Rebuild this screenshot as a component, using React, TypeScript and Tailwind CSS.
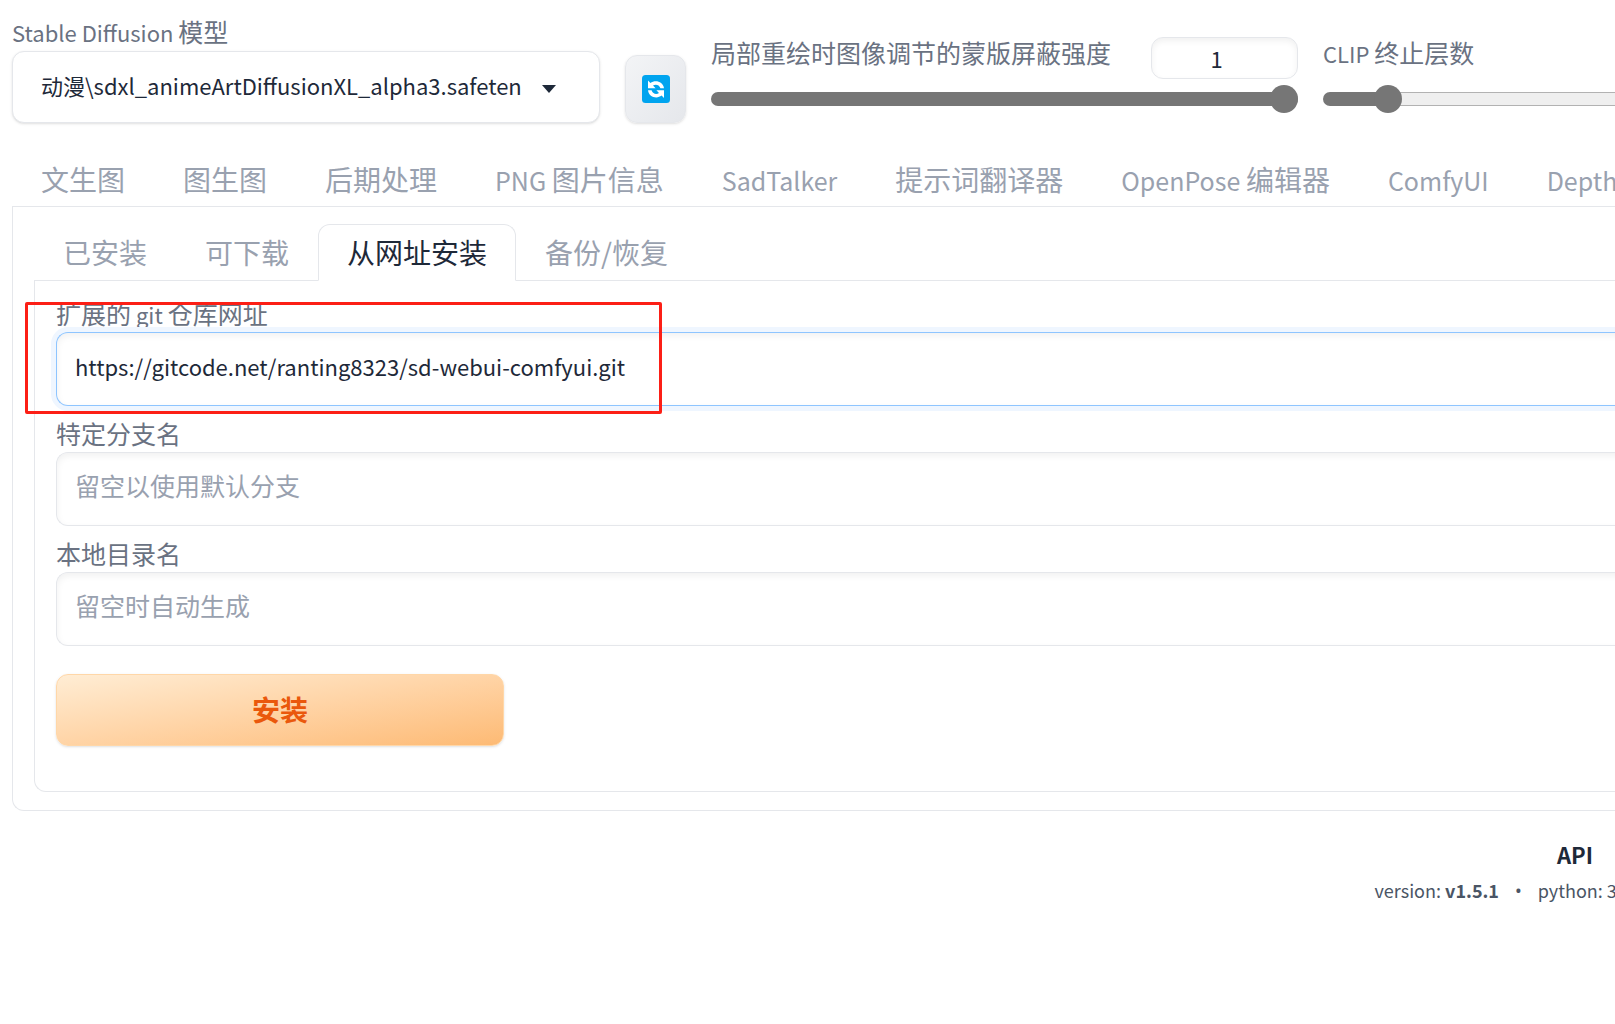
import { useState, type ReactNode } from 'react';

const mainTabs = [
  { cjk: '文生图' },
  { cjk: '图生图' },
  { cjk: '后期处理' },
  { latin: 'PNG ', cjk: '图片信息' },
  { latin: 'SadTalker' },
  { cjk: '提示词翻译器' },
  { latin: 'OpenPose ', cjk: '编辑器' },
  { latin: 'ComfyUI' },
  { latin: 'Depth' },
];

const extensionTabs = ['已安装', '可下载', '从网址安装', '备份/恢复'];

function RefreshIcon() {
  return (
    <svg viewBox="0 0 28 28" className="size-7" aria-hidden="true">
      <rect width="28" height="28" rx="3.5" fill="#00a4ef" />
      <g fill="#fff">
        <path d="M6 5.6 L8.4 8 C13 4.4 21 6.2 22 13.2 L18.4 13.2 C17.2 9.6 13.6 8.8 11 10.6 L13.6 13.2 L6 13.2 Z" />
        <path d="M22 23 L19.6 20.6 C15 24.2 7 22.4 6 15.2 L9.6 15.2 C10.8 19 14.4 19.8 17 18 L14.4 15.2 L22 15.2 Z" />
      </g>
    </svg>
  );
}

const sliderBase =
  'block h-3.5 w-full appearance-none rounded-full bg-no-repeat bg-[linear-gradient(#767676,#767676),linear-gradient(#b2b2b2_1px,#efefef_1px,#efefef_13px,#b2b2b2_13px)] [&::-webkit-slider-runnable-track]:h-3.5 [&::-webkit-slider-thumb]:-mt-[7px] [&::-webkit-slider-thumb]:size-7 [&::-webkit-slider-thumb]:appearance-none [&::-webkit-slider-thumb]:rounded-full [&::-webkit-slider-thumb]:bg-[#767676]';

function Slider({
  id,
  latin = '',
  label,
  min,
  max,
  initial,
}: {
  id: string;
  latin?: string;
  label: string;
  min: number;
  max: number;
  initial: number;
}) {
  const [value, setValue] = useState(initial);
  const percent = ((value - min) / (max - min)) * 100;
  return (
    <div className="w-[587px] shrink-0 pt-[37px]">
      <div className="flex justify-between">
        <label htmlFor={id} className="text-[25px] leading-[30px] text-gray-500">
          <span className="text-[22px]">{latin}</span>
          {label}
        </label>
        <input
          type="text"
          inputMode="numeric"
          aria-label={`${latin}${label} 数值`}
          value={value}
          onChange={(e) => setValue(Number(e.target.value) || min)}
          className="h-[42px] w-[147px] rounded-xl border border-gray-200 bg-white pr-4 text-center text-[22px] text-gray-800 shadow-[inset_0_3px_6px_rgba(0,0,0,0.06)]"
        />
      </div>
      <input
        id={id}
        type="range"
        min={min}
        max={max}
        value={value}
        onChange={(e) => setValue(Number(e.target.value))}
        className={`${sliderBase} mt-[13px]`}
        style={{ backgroundSize: `${percent}% 100%, 100% 100%` }}
      />
    </div>
  );
}

function Field({
  id,
  label,
  value,
  placeholder,
  active = false,
}: {
  id: string;
  label: ReactNode;
  value?: string;
  placeholder?: string;
  active?: boolean;
}) {
  return (
    <div className="-mr-3 flex flex-col">
      <label htmlFor={id} className="h-8 text-[25px] leading-[26px] text-gray-500">
        {label}
      </label>
      <input
        id={id}
        type="text"
        defaultValue={value}
        placeholder={placeholder}
        className={`h-[74px] w-full rounded-l-xl border border-r-0 bg-white px-[18px] pb-1.5 text-[22px] text-gray-800 outline-none placeholder:text-[25px] placeholder:text-gray-400 ${
          active
            ? 'border-blue-300 shadow-[0_0_0_5px_#eff6ff,inset_0_3px_7px_rgba(0,0,0,0.06)]'
            : 'border-gray-200 shadow-[inset_0_3px_7px_rgba(0,0,0,0.06)]'
        }`}
      />
    </div>
  );
}

export default function App() {
  const [tab, setTab] = useState('从网址安装');
  return (
    <div className="min-h-screen overflow-hidden bg-white pl-3 font-['Noto_Sans_CJK_SC',sans-serif] text-gray-800">
      <header className="flex gap-[25px]">
        <div className="w-[588px] shrink-0 pt-[17px]">
          <label htmlFor="model" className="block h-[34px] text-[22px] leading-7 text-gray-500">
            Stable Diffusion <span className="text-[25px]">模型</span>
          </label>
          <div className="relative">
            <select
              id="model"
              className="block h-[72px] w-full appearance-none rounded-xl border border-gray-200 bg-white pb-1 pl-7 text-[22px] shadow-sm"
            >
              <option>动漫\sdxl_animeArtDiffusionXL_alpha3.safeten</option>
            </select>
            <svg
              viewBox="0 0 14 8"
              className="pointer-events-none absolute top-[34px] right-11 h-2 w-3.5 fill-gray-800"
              aria-hidden="true"
            >
              <path d="M0 0h14L7 8z" />
            </svg>
          </div>
        </div>
        <button
          type="button"
          aria-label="刷新"
          className="mt-[55px] flex h-[68px] w-[61px] shrink-0 items-center justify-center rounded-xl border border-gray-200 bg-linear-to-br from-gray-100 to-gray-200 shadow-sm"
        >
          <RefreshIcon />
        </button>
        <Slider id="mask" label="局部重绘时图像调节的蒙版屏蔽强度" min={0} max={1} initial={1} />
        <Slider id="clip" latin="CLIP " label="终止层数" min={1} max={12} initial={2} />
      </header>

      <nav className="mt-[29px] flex h-[54px]">
        {mainTabs.map(({ latin = '', cjk = '' }) => (
          <button
            key={latin + cjk}
            type="button"
            className="shrink-0 px-[29px] text-[28px] leading-[54px] whitespace-pre text-gray-400"
          >
            {latin && <span className="text-[25px]">{latin}</span>}
            {cjk}
          </button>
        ))}
      </nav>

      <main className="rounded-bl-xl border-b border-l border-t border-gray-200 pt-[17px] pb-[18px] pl-[21px]">
        <div className="flex" role="tablist">
          {extensionTabs.map((name) => (
            <button
              key={name}
              type="button"
              role="tab"
              aria-selected={tab === name}
              onClick={() => setTab(name)}
              className={`-mb-px h-[57px] rounded-t-xl border px-7 text-[28px] leading-[55px] whitespace-nowrap ${
                tab === name
                  ? 'border-gray-200 border-b-white bg-white text-gray-800'
                  : 'border-transparent text-gray-400'
              }`}
            >
              {name}
            </button>
          ))}
        </div>
        <section className="rounded-bl-xl border-b border-l border-t border-gray-200 pt-[19px] pb-[45px] pl-[21px]">
          <form className="flex flex-col gap-3.5" onSubmit={(e) => e.preventDefault()}>
            <div className="relative">
              <Field
                id="url"
                label={
                  <>
                    扩展的<span className="text-[22px]"> git </span>仓库网址
                  </>
                }
                value="https://gitcode.net/ranting8323/sd-webui-comfyui.git"
                active
              />
              <div className="pointer-events-none absolute top-[2px] -left-[31px] h-[112px] w-[637px] rounded-xs border-3 border-[#fc1f16]" />
            </div>
            <Field id="branch" label="特定分支名" placeholder="留空以使用默认分支" />
            <Field id="dir" label="本地目录名" placeholder="留空时自动生成" />
            <button
              type="submit"
              className="mt-3.5 h-[72px] w-[448px] rounded-xl border border-orange-200 bg-linear-to-br from-orange-100 to-[#fdba74] pb-0.5 text-[28px] font-bold text-[#ea580c] shadow-sm"
            >
              安装
            </button>
          </form>
        </section>
      </main>

      <footer className="pt-[27px]">
        <div className="flex justify-end pr-[22px]">
          <a href="#api" className="text-[22px] leading-8 font-semibold">
            API
          </a>
        </div>
        <div className="flex gap-4 pl-[85%] text-[18px] leading-10 whitespace-nowrap text-gray-600">
          <span>
            version: <b>v1.5.1</b>
          </span>
          <span className="font-['Noto_Sans',sans-serif]">•</span>
          <span>python: 3</span>
        </div>
      </footer>
    </div>
  );
}
